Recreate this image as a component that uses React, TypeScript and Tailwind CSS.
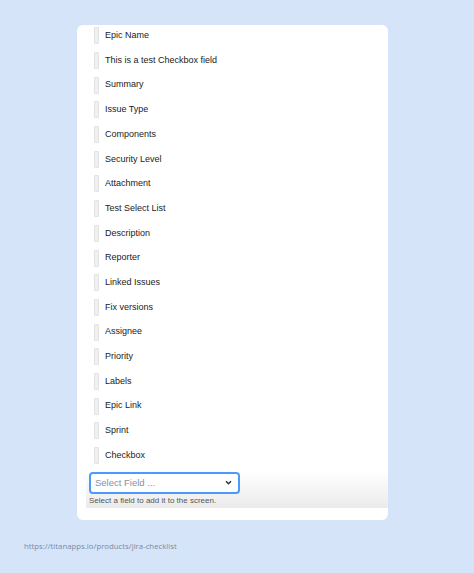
const fields = [
  'Epic Name',
  'This is a test Checkbox field',
  'Summary',
  'Issue Type',
  'Components',
  'Security Level',
  'Attachment',
  'Test Select List',
  'Description',
  'Reporter',
  'Linked Issues',
  'Fix versions',
  'Assignee',
  'Priority',
  'Labels',
  'Epic Link',
  'Sprint',
  'Checkbox',
]

function FieldRow({ name }: { name: string }) {
  return (
    <div className="flex h-[24.7px] items-center gap-[6px] pl-[17px]">
      <span className="h-[17px] w-[5px] shrink-0 rounded-[1px] border border-[#e2e2e2] bg-[#f0f0f0]" />
      <span className="text-[9px] text-[#222]">{name}</span>
    </div>
  )
}

export default function App() {
  return (
    <div className="flex min-h-[573px] flex-col bg-[#d5e4f8] font-['Liberation_Sans',Arial,sans-serif]">
      <div className="ml-[77px] mt-[25px] flex h-[495px] w-[311px] flex-col overflow-hidden rounded-[6px] bg-white">
        <div className="-mt-[1.5px]">
          {fields.map((f) => (
            <FieldRow key={f} name={f} />
          ))}
        </div>
        <div className="mt-[3px] ml-[9px]">
          <div className="bg-gradient-to-b from-white to-[#ebebeb] pt-[1px] pb-[1px]">
            <div className="ml-[3px] flex h-[22px] w-[151px] items-center justify-between rounded-[4px] border-2 border-[#4c9aff] bg-white pl-[4px] pr-[6px]">
              <span className="text-[9.5px] text-[#8a8fa3]">Select Field ...</span>
              <svg width="7" height="5" viewBox="0 0 8 6">
                <path d="M1 1.5 L4 4.5 L7 1.5" fill="none" stroke="#333" strokeWidth="1.8" />
              </svg>
            </div>
            <div className="ml-[3px] mt-[1px] text-[8px] text-[#555]">Select a field to add it to the screen.</div>
          </div>
        </div>
      </div>
      <div className="ml-[24px] mt-[21px] font-['Open_Sans',sans-serif] text-[7.8px] text-[#7c8aa3]">
        https://titanapps.io/products/jira-checklist
      </div>
    </div>
  )
}
